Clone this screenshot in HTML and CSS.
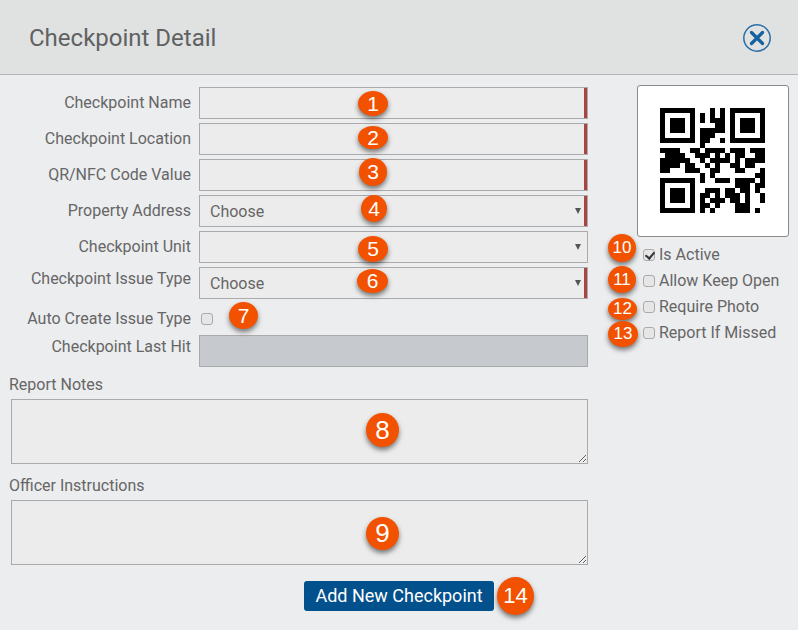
FILE: index.html
```html
<!DOCTYPE html>
<html lang="en">
<head>
<meta charset="utf-8">
<title>Checkpoint Detail</title>
<link rel="stylesheet" href="styles.css">
</head>
<body>
<div class="page">
  <header class="header">
    <h1 class="title">Checkpoint Detail</h1>
    <svg class="close" viewBox="0 0 28 28" width="28" height="28" aria-label="Close">
      <circle cx="14" cy="14" r="13.2" fill="none" stroke="#2a6ea6" stroke-width="1.5"/>
      <path d="M8.5 8.5 19.5 19.5M19.5 8.5 8.5 19.5" fill="none" stroke="#15609f" stroke-width="3.2" stroke-linecap="round"/>
    </svg>
  </header>
  <main class="content">
    <form class="left">
      <div class="row"><label class="label">Checkpoint Name</label><input class="field required" type="text"></div>
      <div class="row"><label class="label">Checkpoint Location</label><input class="field required" type="text"></div>
      <div class="row"><label class="label">QR/NFC Code Value</label><input class="field required" type="text"></div>
      <div class="row"><label class="label">Property Address</label><div class="select"><select class="field required"><option>Choose</option></select></div></div>
      <div class="row"><label class="label">Checkpoint Unit</label><div class="select"><select class="field"><option></option></select></div></div>
      <div class="row"><label class="label raised">Checkpoint Issue Type</label><div class="select"><select class="field required"><option>Choose</option></select></div></div>
      <div class="row row-tight"><label class="label label-mid">Auto Create Issue Type</label><div class="check-cell"><input class="check" type="checkbox"></div></div>
      <div class="row row-tight"><label class="label raised">Checkpoint Last Hit</label><input class="field disabled" type="text" readonly></div>
      <label class="block-label first">Report Notes</label>
      <textarea class="area"></textarea>
      <label class="block-label">Officer Instructions</label>
      <textarea class="area"></textarea>
      <div class="actions"><button class="submit" type="button">Add New Checkpoint</button></div>
    </form>
    <aside class="right">
      <div class="qr-box">
        <svg class="qr" viewBox="0 0 21 21" width="105" height="105" shape-rendering="crispEdges" aria-label="QR code">
          <path fill="#000" fill-rule="evenodd" d="M0 0h7v7H0zM1 1v5h5V1zM2 2h3v3H2zM14 0h7v7h-7zM15 1v5h5V1zM16 2h3v3h-3zM0 14h7v7H0zM1 15v5h5v-5zM2 16h3v3H2z"/>
          <path fill="#000" d="M10 0h1v2h-1zM12 0h1v3h-1zM8 1h1v2H8zM11 2h1v1h-1zM10 2h1v1h-1zM11 3h2v1h-2zM8 4h5v1H8zM8 5h3v1H8zM8 6h2v1H8zM12 6h1v1h-1zM8 7h1v1H8z
          M0 8h4v1H0zM6 8h2v1H6zM9 8h4v1H9zM14 8h3v1h-3zM18 8h3v1h-3z
          M1 9h4v1H1zM7 9h3v1H7zM11 9h1v1h-1zM13 9h1v1h-1zM15 9h2v1h-2zM19 9h2v1h-2z
          M0 10h6v1H0zM8 10h1v1H8zM10 10h4v1h-4zM15 10h1v1h-1zM17 10h4v1h-4z
          M0 11h4v1H0zM5 11h2v1H5zM9 11h1v1H9zM11 11h1v1h-1zM14 11h2v1h-2zM17 11h2v1h-2z
          M0 12h2v1H0zM5 12h3v1H5zM10 12h2v1h-2zM15 12h2v1h-2zM20 12h1v1h-1z
          M8 13h1v1H8zM10 13h1v1h-1zM19 13h2v1h-2z
          M8 14h1v1H8zM11 14h3v1h-3zM15 14h4v1h-4zM20 14h1v1h-1z
          M15 15h3v1h-3zM19 15h2v1h-2z
          M9 16h3v1H9zM13 16h2v1h-2zM16 16h2v1h-2zM19 16h1v1h-1z
          M8 17h2v1H8zM11 17h1v1h-1zM13 17h3v1h-3zM17 17h1v1h-1zM20 17h1v1h-1z
          M8 18h1v1H8zM10 18h3v1h-3zM14 18h2v1h-2zM17 18h1v1h-1zM20 18h1v1h-1z
          M8 19h2v1H8zM11 19h1v1h-1zM15 19h3v1h-3z
          M8 20h1v1H8zM10 20h1v1h-1zM15 20h3v1h-3zM19 20h1v1h-1z"/>
        </svg>
      </div>
      <div class="options">
        <label class="option"><input class="check" type="checkbox" checked><span>Is Active</span></label>
        <label class="option"><input class="check" type="checkbox"><span>Allow Keep Open</span></label>
        <label class="option"><input class="check" type="checkbox"><span>Require Photo</span></label>
        <label class="option"><input class="check" type="checkbox"><span>Report If Missed</span></label>
      </div>
    </aside>
  </main>
  <span class="badge b1">1</span>
  <span class="badge b2">2</span>
  <span class="badge b3">3</span>
  <span class="badge b4">4</span>
  <span class="badge b5">5</span>
  <span class="badge b6">6</span>
  <span class="badge b7">7</span>
  <span class="badge b8">8</span>
  <span class="badge b9">9</span>
  <span class="badge b10">10</span>
  <span class="badge b11">11</span>
  <span class="badge b12">12</span>
  <span class="badge b13">13</span>
  <span class="badge b14">14</span>
</div>
</body>
</html>
```

FILE: styles.css
```css
* { box-sizing: border-box; }
html, body { margin: 0; padding: 0; }
body {
  background: #ecedef;
  font-family: Roboto, "Liberation Sans", sans-serif;
  color: #666;
  font-size: 16px;
}
.page { position: relative; width: 798px; height: 630px; overflow: hidden; }

.header {
  height: 75px;
  background: #e0e2e1;
  border-bottom: 1px solid #b4b5b5;
  display: flex;
  align-items: center;
  justify-content: space-between;
  padding: 1px 27px 0 29px;
}
.title { margin: 0; font-size: 24px; font-weight: 400; color: #5f6163; }

.content { display: flex; padding-top: 10px; }
.left { width: 588px; padding-top: 2px; flex: none; }
.right { width: 152px; margin-left: 49px; flex: none; }

.row {
  display: grid;
  grid-template-columns: 191px 389px;
  column-gap: 8px;
  height: 32px;
  margin-bottom: 4px;
}
.row-tight { margin-bottom: 0; }
.label { text-align: right; line-height: 32px; white-space: nowrap; }
.raised { line-height: 24px; }
.label-mid { line-height: 32px; }

.field {
  width: 100%;
  height: 32px;
  margin: 0;
  display: block;
  background: #ececec;
  border: 1px solid #aaa;
  border-radius: 0;
  outline: none;
  padding: 0 10px;
  font: 16px Roboto, "Liberation Sans", sans-serif;
  color: #666;
  appearance: none;
}
.required { box-shadow: inset -3px 0 0 #a94442; }
.disabled { background: #c6c9cd; }

.select { position: relative; }
.select::after {
  content: "";
  position: absolute;
  right: 7px;
  top: 13px;
  border-left: 3px solid transparent;
  border-right: 3px solid transparent;
  border-top: 6px solid #555;
}

.check-cell { display: flex; align-items: center; padding: 0 0 0 2px; height: 32px; }
.check {
  appearance: none;
  width: 12px;
  height: 12px;
  margin: 0;
  flex: none;
  position: relative;
  background: #e6e6e6;
  border: 1px solid #aaa;
  border-radius: 3px;
}
.option .check { top: 1px; }
.check:checked::after {
  content: "";
  position: absolute;
  left: 3px;
  top: 0;
  width: 4px;
  height: 7px;
  border: solid #333;
  border-width: 0 2px 2px 0;
  transform: rotate(40deg);
}

.block-label { display: block; margin: 13px 0 0 9px; line-height: 18px; height: 18px; }
.block-label.first { margin-top: 9px; }
.area {
  display: block;
  width: 577px;
  height: 65px;
  margin: 5px 0 0 11px;
  background: #ececec;
  border: 1px solid #aaa;
  border-radius: 0;
  outline: none;
  padding: 4px;
}
.actions { display: flex; justify-content: flex-start; padding: 16px 0 0 304px; }
.submit {
  width: 190px;
  height: 30px;
  padding: 0 0 2px;
  background: #02508c;
  border: none;
  border-radius: 3px;
  color: #fff;
  font: 400 18px Roboto, "Liberation Sans", sans-serif;
}

.qr-box {
  width: 152px;
  height: 152px;
  background: #fff;
  border: 1px solid #8a8a8a;
  border-radius: 3px;
  padding: 22px;
}
.qr { display: block; }
.options { margin: 4px 0 0 6px; }
.option {
  display: flex;
  align-items: center;
  gap: 4px;
  height: 26px;
  white-space: nowrap;
}

.badge {
  position: absolute;
  display: flex;
  align-items: center;
  justify-content: center;
  border-radius: 50%;
  background: #f25200;
  color: #fff;
  font: 21px "Liberation Sans", Arial, sans-serif;
  box-shadow: 0 3px 5px rgba(0,0,0,.5);
}
.b1 { left: 358px; top: 91px; width: 30px; height: 25px; }
.b2 { left: 358px; top: 126px; width: 30px; height: 23px; }
.b3 { left: 359px; top: 158px; width: 28px; height: 28px; }
.b4 { left: 361px; top: 195px; width: 26px; height: 27px; }
.b5 { left: 358px; top: 236px; width: 30px; height: 26px; }
.b6 { left: 357px; top: 269px; width: 31px; height: 24px; }
.b7 { left: 229px; top: 302px; width: 29px; height: 27px; }
.b8 { left: 366px; top: 413px; width: 33px; height: 34px; font-size: 26px; }
.b9 { left: 366px; top: 517px; width: 33px; height: 33px; font-size: 26px; }
.b10 { left: 608px; top: 234px; width: 28px; height: 28px; font-size: 17px; }
.b11 { left: 608px; top: 266px; width: 28px; height: 27px; font-size: 17px; }
.b12 { left: 608px; top: 298px; width: 29px; height: 22px; font-size: 17px; }
.b13 { left: 608px; top: 321px; width: 30px; height: 26px; font-size: 17px; }
.b14 { left: 497px; top: 577px; width: 37px; height: 38px; font-size: 22px; }
```
